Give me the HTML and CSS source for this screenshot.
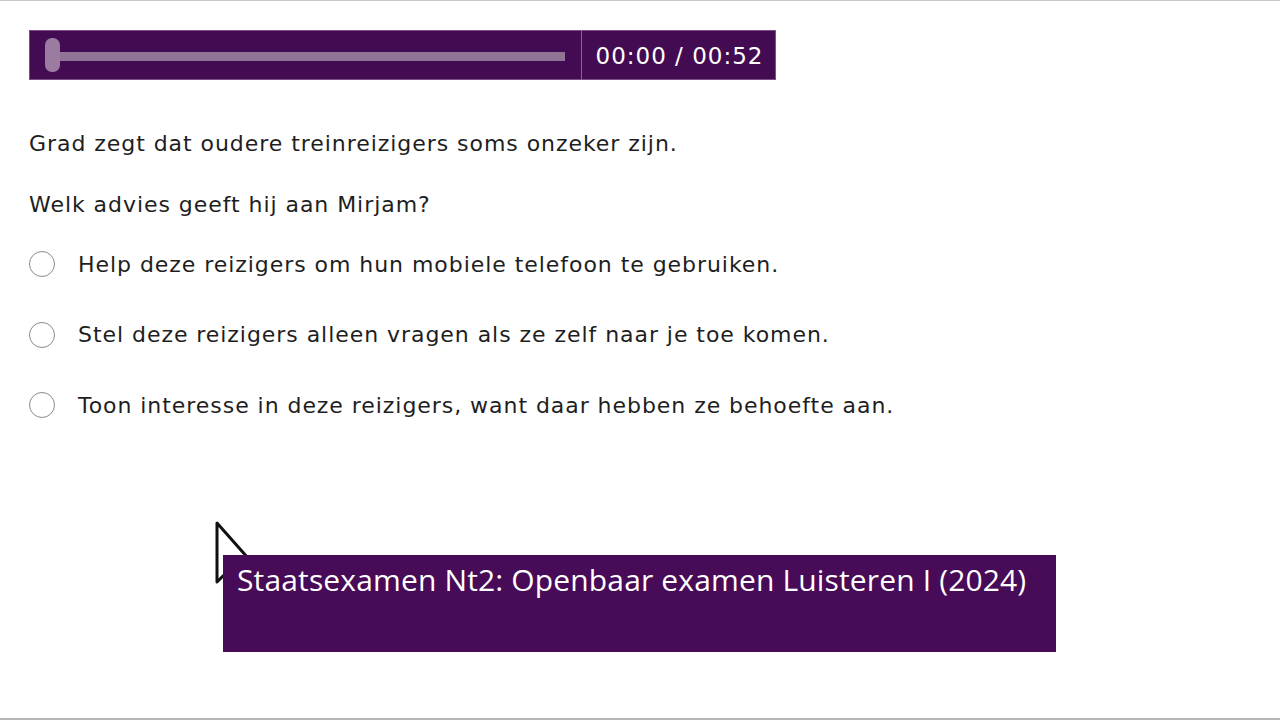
FILE: index.html
```html
<!DOCTYPE html>
<html lang="nl">
<head>
<meta charset="utf-8">
<title>Staatsexamen Nt2</title>
<link rel="stylesheet" href="styles.css">
</head>
<body>
<div class="frame">
  <div class="player">
    <div class="track-area">
      <div class="track"></div>
      <div class="thumb"></div>
    </div>
    <div class="time">00:00 / 00:52</div>
  </div>

  <p class="q">Grad zegt dat oudere treinreizigers soms onzeker zijn.</p>
  <p class="q q2">Welk advies geeft hij aan Mirjam?</p>

  <ul class="options">
    <li class="opt"><span class="radio"></span><span>Help deze reizigers om hun mobiele telefoon te gebruiken.</span></li>
    <li class="opt"><span class="radio"></span><span>Stel deze reizigers alleen vragen als ze zelf naar je toe komen.</span></li>
    <li class="opt"><span class="radio"></span><span>Toon interesse in deze reizigers, want daar hebben ze behoefte aan.</span></li>
  </ul>

  <svg class="cursor" width="44" height="68" viewBox="0 0 44 68">
    <path d="M3 3 L3 62 L16 49 L25 67 L33 63 L24 46 L41 46 Z" fill="#ffffff" stroke="#111" stroke-width="3" stroke-linejoin="round"/>
  </svg>

  <div class="tooltip">Staatsexamen Nt2: Openbaar examen Luisteren I (2024)</div>
</div>
</body>
</html>
```

FILE: styles.css
```css
html, body {
  margin: 0;
  padding: 0;
  background: #fff;
}
.frame {
  position: relative;
  width: 1280px;
  height: 720px;
  box-sizing: border-box;
  border-top: 1px solid #c9c9c9;
  border-bottom: 2px solid #b5b5b5;
  padding: 29px 0 0 29px;
  font-family: "DejaVu Sans", Verdana, sans-serif;
  color: #1e1e1e;
  overflow: hidden;
}
.player {
  display: flex;
  width: 747px;
  height: 50px;
  background: #430c52;
  box-shadow: 0 0 0 1px #7d4f88 inset;
}
.track-area {
  position: relative;
  box-sizing: border-box;
  width: 553px;
  display: flex;
  align-items: center;
  padding: 3px 16px 0 16px;
  border-right: 1px solid #8b6593;
}
.track {
  flex: 1;
  height: 9px;
  background: #917495;
}
.thumb {
  position: absolute;
  left: 16px;
  top: 8px;
  width: 15px;
  height: 34px;
  border-radius: 7px;
  background: #9b7ba0;
}
.time {
  flex: 1;
  display: flex;
  align-items: center;
  justify-content: center;
  padding: 2px 0 0 1px;
  color: #fff;
  font-size: 23px;
  letter-spacing: 1px;
}
.q {
  margin: 0;
  font-size: 22px;
  line-height: 26px;
  letter-spacing: 0.95px;
  margin-top: 51px;
}
.q2 {
  margin-top: 35px;
}
.options {
  list-style: none;
  margin: 33px 0 0;
  padding: 0;
}
.opt {
  display: flex;
  align-items: center;
  height: 26px;
  font-size: 22px;
  letter-spacing: 0.95px;
  margin-bottom: 44.5px;
}
.radio {
  width: 26px;
  height: 26px;
  box-sizing: border-box;
  border: 1.5px solid #8a8a8a;
  border-radius: 50%;
  margin-right: 23px;
  flex: none;
}
.cursor {
  position: absolute;
  left: 214px;
  top: 519px;
}
.tooltip {
  position: absolute;
  left: 223px;
  top: 554px;
  width: 833px;
  height: 97px;
  box-sizing: border-box;
  background: #470b57;
  color: #fff;
  font-family: "Open Sans", sans-serif;
  font-size: 30px;
  letter-spacing: 0.15px;
  padding: 7px 0 0 14px;
  line-height: 36px;
}
```
